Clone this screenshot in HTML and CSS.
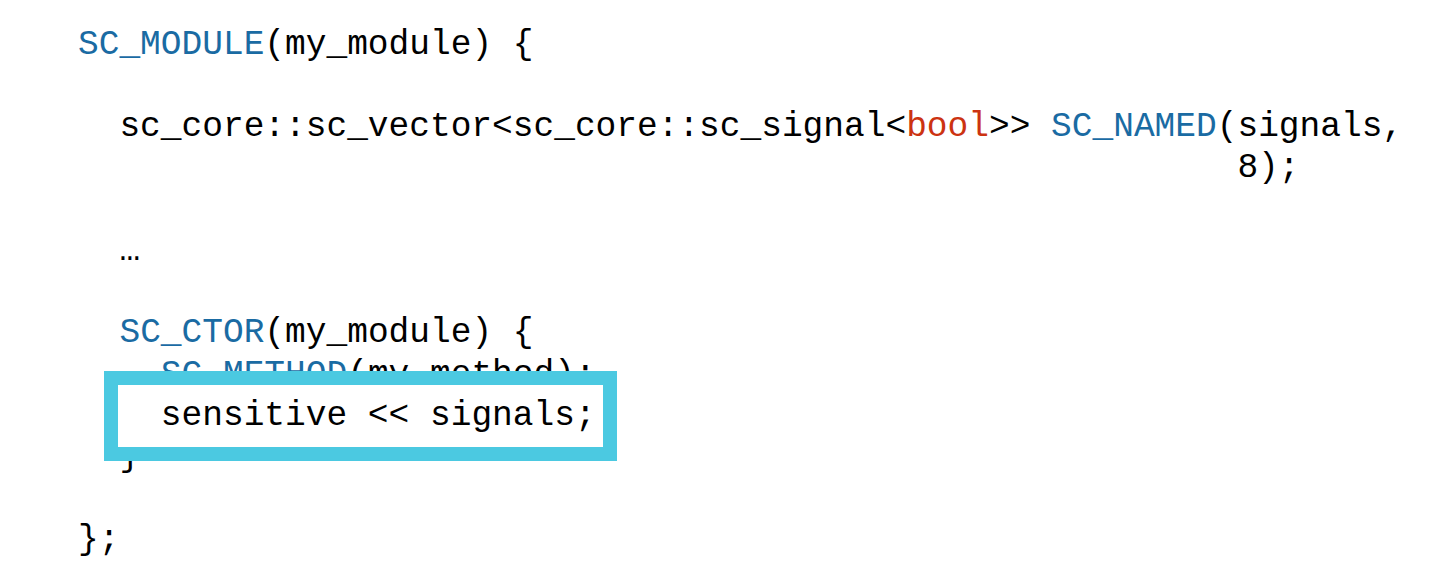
FILE: index.html
```html
<!DOCTYPE html>
<html lang="en">
<head>
<meta charset="utf-8">
<title>SC_MODULE sensitivity</title>
<link rel="stylesheet" href="styles.css">
</head>
<body>
<div class="slide">
<pre class="code"><span class="mac">SC_MODULE</span>(my_module) {

  sc_core::sc_vector&lt;sc_core::sc_signal&lt;<span class="kw">bool</span>&gt;&gt; <span class="mac">SC_NAMED</span>(signals,
                                                        8);

  …

  <span class="mac">SC_CTOR</span>(my_module) {
    <span class="mac">SC_METHOD</span>(my_method);
    <span class="front">sensitive &lt;&lt; signals;</span>
  }

};</pre>
<div class="highlight"></div>
</div>
</body>
</html>
```

FILE: styles.css
```css
html, body {
  margin: 0;
  padding: 0;
  background: #ffffff;
}

.slide {
  position: relative;
  width: 1440px;
  height: 575px;
  overflow: hidden;
  background: #ffffff;
}

.code {
  margin: 0;
  padding: 23.5px 0 0 78px;
  font-family: "Liberation Mono", "DejaVu Sans Mono", monospace;
  font-size: 34.5px;
  line-height: 41.25px;
  color: #000000;
  white-space: pre;
}

.mac {
  color: #1a6ba3;
}

.kw {
  color: #cc3311;
}

.front {
  position: relative;
  z-index: 2;
}

.highlight {
  position: absolute;
  z-index: 1;
  left: 104px;
  top: 371px;
  width: 485px;
  height: 62px;
  border: 14px solid #4bc9e1;
  background: #ffffff;
}
```
